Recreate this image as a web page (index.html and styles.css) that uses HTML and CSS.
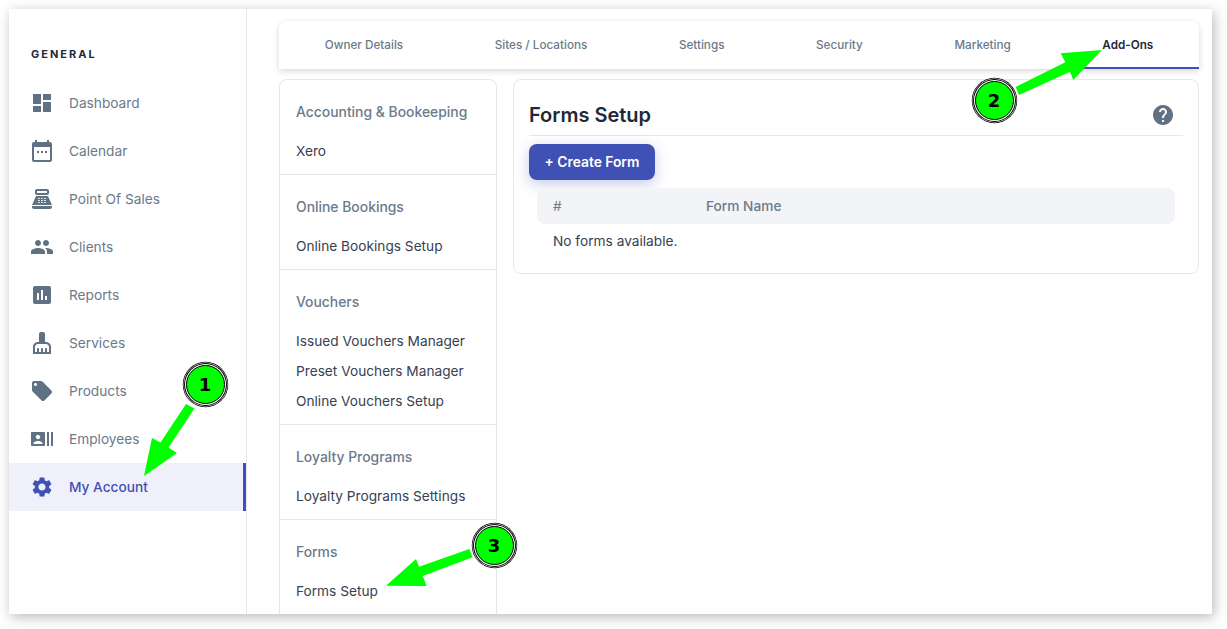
FILE: index.html
```html
<!DOCTYPE html>
<html lang="en">
<head>
    <meta charset="UTF-8">
    <title>Forms Setup</title>
    <link rel="stylesheet" href="styles.css">
</head>
<body>

    <div class="frame">
        <aside class="sidebar">
            <h6 class="side-title">GENERAL</h6>
            <a class="side-item"><svg viewBox="0 0 24 24"><path d="M3 13h8V3H3v10zm0 8h8v-6H3v6zm10 0h8V11h-8v10zm0-18v6h8V3h-8z"/></svg><span>Dashboard</span></a>
            <a class="side-item"><svg viewBox="0 0 24 24"><path d="M20 3h-1V1h-2v2H7V1H5v2H4c-1.1 0-2 .9-2 2v16c0 1.1.9 2 2 2h16c1.1 0 2-.9 2-2V5c0-1.1-.9-2-2-2zm0 18H4V8h16v13z"/><path d="M7 12h2v2H7zM11 12h2v2h-2zM15 12h2v2h-2z"/></svg><span>Calendar</span></a>
            <a class="side-item"><svg viewBox="0 0 24 24"><path d="M17 2H7c-1.1 0-2 .9-2 2v2c0 1.1.9 2 2 2h10c1.1 0 2-.9 2-2V4c0-1.1-.9-2-2-2zm0 4H7V4h10v2zm3 16H4c-1.1 0-2-.9-2-2v-1h20v1c0 1.1-.9 2-2 2zm-1.47-11.81C18.21 9.47 17.49 9 16.7 9H7.3c-.79 0-1.51.47-1.83 1.19L2 18h20l-3.47-7.81zM9.5 16h-1c-.28 0-.5-.22-.5-.5s.22-.5.5-.5h1c.28 0 .5.22.5.5s-.22.5-.5.5zm0-2h-1c-.28 0-.5-.22-.5-.5s.22-.5.5-.5h1c.28 0 .5.22.5.5s-.22.5-.5.5zm0-2h-1c-.28 0-.5-.22-.5-.5s.22-.5.5-.5h1c.28 0 .5.22.5.5s-.22.5-.5.5zm3 4h-1c-.28 0-.5-.22-.5-.5s.22-.5.5-.5h1c.28 0 .5.22.5.5s-.22.5-.5.5zm0-2h-1c-.28 0-.5-.22-.5-.5s.22-.5.5-.5h1c.28 0 .5.22.5.5s-.22.5-.5.5zm0-2h-1c-.28 0-.5-.22-.5-.5s.22-.5.5-.5h1c.28 0 .5.22.5.5s-.22.5-.5.5zm3 4h-1c-.28 0-.5-.22-.5-.5s.22-.5.5-.5h1c.28 0 .5.22.5.5s-.22.5-.5.5zm0-2h-1c-.28 0-.5-.22-.5-.5s.22-.5.5-.5h1c.28 0 .5.22.5.5s-.22.5-.5.5zm0-2h-1c-.28 0-.5-.22-.5-.5s.22-.5.5-.5h1c.28 0 .5.22.5.5s-.22.5-.5.5z"/></svg><span>Point Of Sales</span></a>
            <a class="side-item"><svg viewBox="0 0 24 24"><path d="M16 11c1.66 0 2.99-1.34 2.99-3S17.66 5 16 5c-1.66 0-3 1.34-3 3s1.34 3 3 3zm-8 0c1.66 0 2.99-1.34 2.99-3S9.66 5 8 5C6.34 5 5 6.34 5 8s1.34 3 3 3zm0 2c-2.33 0-7 1.17-7 3.5V19h14v-2.5c0-2.33-4.67-3.5-7-3.5zm8 0c-.29 0-.62.02-.97.05 1.16.84 1.97 1.97 1.97 3.45V19h6v-2.5c0-2.33-4.67-3.5-7-3.5z"/></svg><span>Clients</span></a>
            <a class="side-item"><svg viewBox="0 0 24 24"><path d="M19 3H5c-1.1 0-2 .9-2 2v14c0 1.1.9 2 2 2h14c1.1 0 2-.9 2-2V5c0-1.1-.9-2-2-2zM9 17H7v-7h2v7zm4 0h-2V7h2v10zm4 0h-2v-4h2v4z"/></svg><span>Reports</span></a>
            <a class="side-item"><svg viewBox="0 0 24 24"><path d="M16 11h-1V3c0-1.1-.9-2-2-2h-2c-1.1 0-2 .9-2 2v8H8c-2.76 0-5 2.24-5 5v7h18v-7c0-2.76-2.24-5-5-5zm3 10h-2v-3c0-.55-.45-1-1-1s-1 .45-1 1v3h-2v-3c0-.55-.45-1-1-1s-1 .45-1 1v3H9v-3c0-.55-.45-1-1-1s-1 .45-1 1v3H5v-5c0-1.65 1.35-3 3-3h8c1.65 0 3 1.35 3 3v5z"/></svg><span>Services</span></a>
            <a class="side-item"><svg viewBox="0 0 24 24"><path d="M21.41 11.58l-9-9C12.05 2.22 11.55 2 11 2H4c-1.1 0-2 .9-2 2v7c0 .55.22 1.05.59 1.42l9 9c.36.36.86.58 1.41.58.55 0 1.05-.22 1.41-.59l7-7c.37-.36.59-.86.59-1.41 0-.55-.23-1.06-.59-1.42zM5.5 7C4.67 7 4 6.33 4 5.5S4.67 4 5.5 4 7 4.67 7 5.5 6.33 7 5.5 7z"/></svg><span>Products</span></a>
            <a class="side-item"><svg viewBox="0 0 24 24"><path d="M21 5v14h2V5h-2zm-4 14h2V5h-2v14zM14 5H2c-.55 0-1 .45-1 1v12c0 .55.45 1 1 1h12c.55 0 1-.45 1-1V6c0-.55-.45-1-1-1zM8 7.75c1.24 0 2.25 1.01 2.25 2.25S9.24 12.25 8 12.25 5.75 11.24 5.75 10 6.76 7.75 8 7.75zM12.5 17h-9v-.75c0-1.5 3-2.25 4.5-2.25s4.5.75 4.5 2.25V17z"/></svg><span>Employees</span></a>
            <a class="side-item active"><svg viewBox="0 0 24 24"><path d="M19.14 12.94c.04-.3.06-.61.06-.94 0-.32-.02-.64-.07-.94l2.03-1.58c.18-.14.23-.41.12-.61l-1.92-3.32c-.12-.22-.37-.29-.59-.22l-2.39.96c-.5-.38-1.03-.7-1.62-.94l-.36-2.54c-.04-.24-.24-.41-.48-.41h-3.84c-.24 0-.43.17-.47.41l-.36 2.54c-.59.24-1.13.57-1.62.94l-2.39-.96c-.22-.08-.47 0-.59.22L2.74 8.87c-.12.21-.08.47.12.61l2.03 1.58c-.05.3-.09.63-.09.94s.02.64.07.94l-2.03 1.58c-.18.14-.23.41-.12.61l1.92 3.32c.12.22.37.29.59.22l2.39-.96c.5.38 1.03.7 1.62.94l.36 2.54c.05.24.24.41.48.41h3.84c.24 0 .44-.17.47-.41l.36-2.54c.59-.24 1.13-.56 1.62-.94l2.39.96c.22.08.47 0 .59-.22l1.92-3.32c.12-.22.07-.47-.12-.61l-2.01-1.58zM12 15.6c-1.98 0-3.6-1.62-3.6-3.6s1.62-3.6 3.6-3.6 3.6 1.62 3.6 3.6-1.62 3.6-3.6 3.6z"/></svg><span>My Account</span></a>
        </aside>

        <main class="main">
            <nav class="tabs">
                <a class="tab">Owner Details</a>
                <a class="tab">Sites / Locations</a>
                <a class="tab">Settings</a>
                <a class="tab">Security</a>
                <a class="tab">Marketing</a>
                <a class="tab active">Add-Ons</a>
            </nav>

            <div class="content">
                <div class="menu">
                    <section class="menu-group">
                        <h6>Accounting &amp; Bookeeping</h6>
                        <a>Xero</a>
                    </section>
                    <section class="menu-group">
                        <h6>Online Bookings</h6>
                        <a>Online Bookings Setup</a>
                    </section>
                    <section class="menu-group">
                        <h6>Vouchers</h6>
                        <a>Issued Vouchers Manager</a>
                        <a>Preset Vouchers Manager</a>
                        <a>Online Vouchers Setup</a>
                    </section>
                    <section class="menu-group">
                        <h6>Loyalty Programs</h6>
                        <a>Loyalty Programs Settings</a>
                    </section>
                    <section class="menu-group">
                        <h6>Forms</h6>
                        <a>Forms Setup</a>
                    </section>
                </div>

                <div class="card">
                    <div class="card-head">
                        <h2>Forms Setup</h2>
                        <svg viewBox="0 0 24 24"><path d="M12 2C6.48 2 2 6.48 2 12s4.48 10 10 10 10-4.48 10-10S17.52 2 12 2zm1 17h-2v-2h2v2zm2.07-7.75l-.9.92C13.45 12.9 13 13.5 13 15h-2v-.5c0-1.1.45-2.1 1.17-2.83l1.24-1.26c.37-.36.59-.86.59-1.41 0-1.1-.9-2-2-2s-2 .9-2 2H8c0-2.21 1.79-4 4-4s4 1.79 4 4c0 .88-.36 1.68-.93 2.25z"/></svg>
                    </div>
                    <button class="btn">+ Create Form</button>
                    <div class="table">
                        <div class="table-head">
                            <span class="col-num">#</span>
                            <span>Form Name</span>
                        </div>
                        <div class="table-empty">No forms available.</div>
                    </div>
                </div>
            </div>
        </main>
    </div>

    <!-- callouts drawn over the screenshot -->
    <svg class="arrows" viewBox="0 0 1227 629">
        <polygon points="186,404 194.5,408.5 168.5,447.5 177,453 144,476 152,438 160.5,442.5"/>
        <polygon points="1015.7,87 1019,95 1070,71.7 1073.3,80 1101.7,50 1060.7,53.3 1065.3,62.3"/>
        <polygon points="469.3,549 472.7,557.3 422.7,576 426.7,586 386,585.7 416,559 419,566.7"/>
    </svg>
    <span class="badge badge-1">1</span>
    <span class="badge badge-2">2</span>
    <span class="badge badge-3">3</span>

</body>
</html>
```

FILE: styles.css
```css
html, body {
    height: 100%;
    overflow: hidden;
}
body {
    margin: 0;
    padding: 9px 15px 15px 9px;
    box-sizing: border-box;
    background: #fff;
    font-family: Inter, "Liberation Sans", sans-serif;
    font-size: 13.7px;
    color: #374151;
    position: relative;
}
a {
    display: block;
}
h2, h6 {
    margin: 0;
}
.frame {
    display: flex;
    height: 605px;
    background: #fff;
    overflow: hidden;
    box-shadow: 2px 3px 12px rgba(0, 0, 0, 0.28);
}

/* sidebar */
.sidebar {
    width: 238px;
    flex: none;
    box-sizing: border-box;
    border-right: 1px solid #e5e7eb;
    padding-top: 38px;
}
.side-title {
    font-size: 11px;
    font-weight: 700;
    letter-spacing: 2px;
    line-height: 14px;
    color: #1f2937;
    padding-left: 22px;
    margin-bottom: 18px;
}
.side-item {
    display: flex;
    align-items: center;
    height: 48px;
    padding-left: 21px;
    color: #6b7a8a;
}
.side-item svg {
    width: 24px;
    height: 24px;
    margin-right: 15px;
    fill: #5f7183;
}
.side-item.active {
    background: #eff0fa;
    color: #3f51b5;
    font-weight: 500;
    border-right: 3px solid #3f51b5;
}
.side-item.active svg {
    fill: #3f51b5;
}

/* top tabs */
.main {
    flex: 1;
    padding: 12px 13px 0 32px;
    min-width: 0;
}
.tabs {
    display: flex;
    justify-content: space-around;
    height: 48px;
    background: #fff;
    border-radius: 8px 8px 0 0;
    box-shadow: 0 2px 6px rgba(0, 0, 0, 0.16);
}
.tab {
    flex: 1 1 auto;
    text-align: center;
    font-size: 11.7px;
    font-weight: 500;
    line-height: 48px;
    color: #6b7a8a;
}
.tab.active {
    font-weight: 600;
    color: #1f2937;
    border-bottom: 2px solid #3f51b5;
}

.content {
    display: flex;
    align-items: flex-start;
    gap: 16px;
    margin-top: 10px;
}

/* left menu */
.menu {
    width: 218px;
    flex: none;
    box-sizing: border-box;
    border: 1px solid #e5e7eb;
    border-radius: 8px;
    padding-bottom: 12px;
}
.menu-group {
    padding: 17px 16px 8px;
    border-bottom: 1px solid #e5e7eb;
}
.menu-group:last-child {
    border-bottom: none;
}
.menu-group h6 {
    font-size: 13.9px;
    font-weight: 500;
    line-height: 30px;
    margin-bottom: 9px;
    color: #6b7a8a;
}
.menu-group a {
    line-height: 30px;
    color: #374151;
}

/* forms card */
.card {
    flex: 1;
    box-sizing: border-box;
    height: 195px;
    border: 1px solid #e5e7eb;
    border-radius: 8px;
    padding: 15px 15px 0;
}
.card-head {
    display: flex;
    align-items: center;
    justify-content: space-between;
    height: 40px;
    border-bottom: 1px solid #e5e7eb;
    margin-bottom: 8px;
}
.card-head h2 {
    font-size: 20px;
    font-weight: 600;
    color: #1f2937;
}
.card-head svg {
    width: 24px;
    height: 24px;
    fill: #5f7183;
    margin-right: 8px;
}
.btn {
    display: block;
    width: 126px;
    height: 36px;
    padding: 0;
    border: none;
    border-radius: 8px;
    background: #3f51b5;
    color: #fff;
    font-family: inherit;
    font-size: 13.8px;
    font-weight: 600;
    box-shadow: 0 4px 14px rgba(63, 81, 181, 0.3);
}
.table {
    margin: 8px 8px 0;
}
.table-head {
    display: flex;
    align-items: center;
    height: 36px;
    padding-left: 16px;
    background: #f3f4f7;
    border-radius: 8px;
    font-weight: 500;
    color: #6b7a8a;
}
.col-num {
    width: 153px;
    font-weight: 400;
}
.table-empty {
    line-height: 34px;
    padding-left: 16px;
}

/* callouts */
.arrows {
    position: absolute;
    top: 0;
    left: 0;
    width: 1227px;
    height: 629px;
    pointer-events: none;
}
.arrows polygon {
    fill: #00ff00;
}
.badge {
    position: absolute;
    width: 39px;
    height: 39px;
    box-sizing: border-box;
    border: 1px solid #000;
    border-radius: 50%;
    background: #00ff00;
    box-shadow: 0 0 0 1px #fff, 0 0 0 2px #000, 0 0 0 2.5px #fff, 0 0 0 3.2px #000;
    font-family: "DejaVu Sans", sans-serif;
    font-size: 18px;
    font-weight: 700;
    line-height: 37px;
    text-align: center;
    color: #000;
}
.badge-1 {
    left: 185.5px;
    top: 365px;
}
.badge-2 {
    left: 974.5px;
    top: 80.5px;
}
.badge-3 {
    left: 474.5px;
    top: 525.5px;
}
```
